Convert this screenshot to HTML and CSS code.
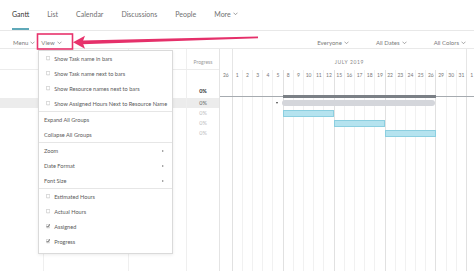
FILE: index.html
```html
<!DOCTYPE html>
<html>
<head>
<meta charset="utf-8">
<link rel="stylesheet" href="styles.css">
</head>
<body>
<div class="page">
  <nav class="tabs">
    <span class="tab active">Gantt</span>
    <span class="tab">List</span>
    <span class="tab">Calendar</span>
    <span class="tab">Discussions</span>
    <span class="tab">People</span>
    <span class="tab">More <svg class="chev" viewBox="0 0 6 4"><polyline points="0.6,0.8 3,3.2 5.4,0.8"/></svg></span>
  </nav>

  <div class="toolbar">
    <div class="tb-group">
      <span class="tb-item">Menu <svg class="chev" viewBox="0 0 6 4"><polyline points="0.6,0.8 3,3.2 5.4,0.8"/></svg></span>
      <span class="tb-item">View <svg class="chev" viewBox="0 0 6 4"><polyline points="0.6,0.8 3,3.2 5.4,0.8"/></svg></span>
    </div>
    <div class="tb-group tb-right">
      <span class="tb-item">Everyone <svg class="chev" viewBox="0 0 6 4"><polyline points="0.6,0.8 3,3.2 5.4,0.8"/></svg></span>
      <span class="tb-item">All Dates <svg class="chev" viewBox="0 0 6 4"><polyline points="0.6,0.8 3,3.2 5.4,0.8"/></svg></span>
      <span class="tb-item">All Colors <svg class="chev" viewBox="0 0 6 4"><polyline points="0.6,0.8 3,3.2 5.4,0.8"/></svg></span>
    </div>
  </div>

  <div class="table">
    <div class="left">
      <div class="lrow lhead"><div></div><div></div><div></div><div class="pct head">Progress</div></div>
      <div class="lrow lsub"><div></div><div></div><div></div><div></div></div>
      <div class="lrow la"><div></div><div></div><div></div><div class="pct strong">0%</div></div>
      <div class="lrow lb"><div></div><div></div><div></div><div class="pct">0%</div></div>
      <div class="lrow lc"><div></div><div></div><div></div><div class="pct faint">0%</div></div>
      <div class="lrow lc"><div></div><div></div><div></div><div class="pct faint">0%</div></div>
      <div class="lrow lc"><div></div><div></div><div></div><div class="pct faint">0%</div></div>
      <div class="lrow lfill"><div></div><div></div><div></div><div></div></div>
    </div>

    <div class="chart">
      <div class="month">
        <div class="m-cell"></div>
        <div class="m-cell m-border">JULY 2019</div>
        <div class="m-cell m-border"></div>
      </div>
      <div class="days">
        <div class="day first">26</div>
        <div class="day wk">1</div>
        <div class="day">2</div>
        <div class="day">3</div>
        <div class="day">4</div>
        <div class="day">5</div>
        <div class="day wk">8</div>
        <div class="day">9</div>
        <div class="day">10</div>
        <div class="day">11</div>
        <div class="day">12</div>
        <div class="day wk">15</div>
        <div class="day">16</div>
        <div class="day">17</div>
        <div class="day">18</div>
        <div class="day">19</div>
        <div class="day wk">22</div>
        <div class="day">23</div>
        <div class="day">24</div>
        <div class="day">25</div>
        <div class="day">26</div>
        <div class="day wk">29</div>
        <div class="day">30</div>
        <div class="day">31</div>
        <div class="day wk">1</div>
      </div>
      <div class="rows">
        <div class="crow ca"><div class="track"><div class="bar-dark" style="margin-left:62.6px;width:153px"></div></div></div>
        <div class="crow cb"><span class="caret"></span><div class="bar-grey" style="margin-left:3.4px;width:153px"></div></div>
        <div class="crow cc"><div class="bar-cyan" style="margin-left:62.6px;width:51px"></div></div>
        <div class="crow cc"><div class="bar-cyan" style="margin-left:113.6px;width:51px"></div></div>
        <div class="crow cc"><div class="bar-cyan" style="margin-left:164.6px;width:51px"></div></div>
      </div>
    </div>
  </div>

  <div class="menu">
    <div class="mi"><svg class="cb" viewBox="0 0 5 5"><rect x="0.4" y="0.4" width="4.2" height="4.2" rx="0.6"/></svg>Show Task name in bars</div>
    <div class="mi"><svg class="cb" viewBox="0 0 5 5"><rect x="0.4" y="0.4" width="4.2" height="4.2" rx="0.6"/></svg>Show Task name next to bars</div>
    <div class="mi"><svg class="cb" viewBox="0 0 5 5"><rect x="0.4" y="0.4" width="4.2" height="4.2" rx="0.6"/></svg>Show Resource names next to bars</div>
    <div class="mi"><svg class="cb" viewBox="0 0 5 5"><rect x="0.4" y="0.4" width="4.2" height="4.2" rx="0.6"/></svg>Show Assigned Hours Next to Resource Name</div>
    <div class="sep"></div>
    <div class="mi plain">Expand All Groups</div>
    <div class="mi plain">Collapse All Groups</div>
    <div class="sep"></div>
    <div class="mi plain">Zoom<span class="sub"></span></div>
    <div class="mi plain">Date Format<span class="sub"></span></div>
    <div class="mi plain">Font Size<span class="sub"></span></div>
    <div class="sep"></div>
    <div class="mi"><svg class="cb" viewBox="0 0 5 5"><rect x="0.4" y="0.4" width="4.2" height="4.2" rx="0.6"/></svg>Estimated Hours</div>
    <div class="mi"><svg class="cb" viewBox="0 0 5 5"><rect x="0.4" y="0.4" width="4.2" height="4.2" rx="0.6"/></svg>Actual Hours</div>
    <div class="mi"><svg class="cb checked" viewBox="0 0 5 5"><rect x="0.4" y="0.4" width="4.2" height="4.2" rx="0.6"/><polyline class="tick" points="1,2.6 2.1,3.8 4.6,0.4"/></svg>Assigned</div>
    <div class="mi"><svg class="cb checked" viewBox="0 0 5 5"><rect x="0.4" y="0.4" width="4.2" height="4.2" rx="0.6"/><polyline class="tick" points="1,2.6 2.1,3.8 4.6,0.4"/></svg>Progress</div>
  </div>

  <svg class="annot" viewBox="0 0 474 60" width="474" height="60">
    <rect x="37.5" y="34" width="35" height="15" fill="none" stroke="#e8336c" stroke-width="1.6"/>
    <polygon points="82,40.6 258,36.6 258,38.2 82,44.2" fill="#e5306a"/>
    <polygon points="73,42.3 85,35.8 82.5,42.3 85,48.8" fill="#e8336c"/>
  </svg>
</div>
</body>
</html>
```

FILE: styles.css
```css
* { box-sizing: border-box; }
html, body { margin: 0; padding: 0; background: #fff; }
body {
  width: 474px;
  height: 271px;
  overflow: hidden;
  font-family: Lato, "Open Sans", "Liberation Sans", sans-serif;
  color: #555;
}
.page {
  position: relative;
  width: 474px;
  height: 271px;
  overflow: hidden;
  display: flex;
  flex-direction: column;
}

/* top tabs */
.tabs {
  flex: none;
  display: flex;
  gap: 18px;
  padding-left: 12px;
  height: 31px;
  border-bottom: 1px solid #e8e8e8;
}
.tab {
  height: 30px;
  display: flex;
  align-items: center;
  gap: 2px;
  font-size: 7px;
  color: #707070;
  border-bottom: 2px solid transparent;
}
.tab.active { color: #333; border-bottom-color: #5fa9b9; }
.chev { width: 5px; height: 3.4px; fill: none; stroke: currentColor; stroke-width: 0.8; }

/* toolbar */
.toolbar {
  flex: none;
  height: 17px;
  display: flex;
  justify-content: space-between;
  padding: 6px 8px 0 13px;
  font-size: 6px;
  color: #7a7a7a;
}
.tb-group { display: flex; gap: 6px; height: 11px; align-items: center; }
.tb-right { gap: 27px; }
.tb-item { display: flex; align-items: center; gap: 2px; }

/* table */
.table {
  flex: 1;
  min-height: 0;
  display: flex;
  border-top: 1px solid #e9e9e9;
}
.left {
  flex: none;
  width: 220px;
  display: flex;
  flex-direction: column;
  border-right: 1px solid #e4e4e4;
}
.lrow {
  display: grid;
  grid-template-columns: 43px 85px 58px 33px;
}
.lrow > div + div { border-left: 1px solid #efefef; }
.lhead { height: 21px; border-bottom: 1px solid #ececec; }
.lsub { height: 12px; }
.la { height: 16px; }
.lb { height: 10px; background: #ececec; }
.lc { height: 10px; }
.lfill { flex: 1; }
.pct {
  font-size: 5.5px;
  line-height: 8px;
  text-align: center;
  color: #666;
  padding-top: 1px;
}
.pct.head { padding-top: 9px; font-size: 5px; color: #9a9a9a; }
.pct.strong { padding-top: 5px; color: #333; font-weight: 700; }
.pct.faint { color: #bdbdbd; }

/* chart */
.chart {
  flex: 1;
  position: relative;
  overflow: hidden;
}
.month {
  display: grid;
  grid-template-columns: 11.7px 234.4px 30px;
  height: 21px;
}
.m-cell {
  font-size: 5px;
  letter-spacing: 0.6px;
  color: #888;
  text-align: center;
  padding-top: 10px;
  line-height: 6px;
}
.m-border { border-left: 1px solid #e6e6e6; }
.days {
  position: absolute;
  top: 21px;
  bottom: 0;
  left: 0;
  display: grid;
  grid-template-columns: 11.7px repeat(24, 10.19px);
}
.day {
  border-left: 1px solid #f1f1f1;
  font-size: 5px;
  line-height: 6px;
  padding-top: 2px;
  text-align: center;
  color: #777;
}
.day.first { border-left: none; }
.day.wk { border-left-color: #e1e1e1; }

.rows {
  position: relative;
  margin-top: 12px;
}
.crow { display: flex; }
.ca { height: 16px; padding-top: 13px; }
.track {
  width: 100%;
  height: 3px;
  display: flex;
  background: linear-gradient(#a6abb0, #a6abb0) center / 100% 1px no-repeat;
}
.bar-dark { height: 3px; background: #7b8086; }
.cb { height: 10px; align-items: center; }
.caret {
  margin-left: 56.2px;
  width: 0;
  height: 0;
  border-left: 1.5px solid transparent;
  border-right: 1.5px solid transparent;
  border-top: 2px solid #444;
}
.bar-grey { height: 6.5px; border-radius: 3.5px; background: #d4d6db; }
.cc { height: 10px; padding-top: 2px; }
.bar-cyan {
  height: 7px;
  background: #b5e3ef;
  border: 1px solid #8ccfe0;
}

/* dropdown menu */
.menu {
  position: absolute;
  left: 38px;
  top: 50px;
  width: 135px;
  height: 204px;
  background: #fff;
  border: 1px solid #dadada;
  box-shadow: 0 1px 3px rgba(0, 0, 0, 0.08);
  display: flex;
  flex-direction: column;
}
.mi {
  height: 15px;
  display: flex;
  align-items: center;
  padding: 0 8px 0 5px;
  font-size: 5.6px;
  color: #5a5a5a;
  white-space: nowrap;
}
.mi .cb {
  width: 4.2px;
  height: 4.2px;
  margin-left: 1.5px;
  margin-right: 4.5px;
  fill: none;
  stroke: #9a9a9a;
  stroke-width: 0.5;
  flex: none;
}
.mi .cb .tick { stroke: #333; stroke-width: 0.9; fill: none; }
.mi.plain { justify-content: space-between; }
.sub {
  width: 0;
  height: 0;
  border-left: 2.2px solid #888;
  border-top: 1.6px solid transparent;
  border-bottom: 1.6px solid transparent;
}
.sep { height: 1px; background: #e6e6e6; flex: none; }

/* annotation overlay */
.annot {
  position: absolute;
  left: 0;
  top: 0;
  pointer-events: none;
}
```
